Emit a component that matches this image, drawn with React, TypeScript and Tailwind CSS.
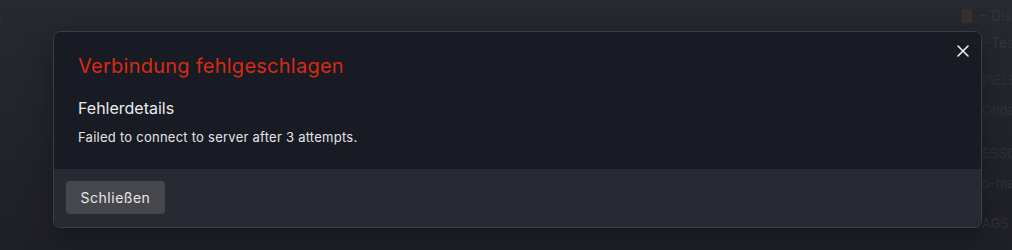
import React from "react";

export default function App() {
  const font = { fontFamily: "Inter, 'Noto Sans', sans-serif" };
  return (
    <div
      className="relative w-[1012px] h-[250px] overflow-hidden bg-gradient-to-b from-[#272930] to-[#1f2026]"
      style={font}
    >
      {/* faded background page */}
      <div className="flex h-full justify-between whitespace-nowrap">
        <div className="pt-[6px] -ml-[6px] text-[14px] text-[#30323a]">a</div>
        <div className="w-[50px] flex flex-col pt-[6px] text-[13px] leading-[20px] text-[#30323a]">
          <div className="flex items-center gap-2 text-[14px] text-[#33353d]">
            <span className="w-[10px] h-[14px] bg-[#3a3030] shrink-0" />
            <span>– Dis</span>
          </div>
          <div className="pl-[18px] mt-[7px] text-[14px] text-[#33353d]">– Tea</div>
          <div className="pl-[20px] mt-[17px]">PIELE</div>
          <div className="pl-[20px] mt-[10px]">Onda</div>
          <div className="pl-[20px] mt-[23px]">ESSO</div>
          <div className="pl-[20px] mt-[10px]">o-ma</div>
          <div className="pl-[20px] mt-[20px]">AGS</div>
        </div>
      </div>

      {/* dialog */}
      <div className="absolute left-[53px] top-[31px] w-[929px] h-[197px] rounded-[7px] border-[1.5px] border-[#3b3e48] bg-[#181a24] overflow-hidden flex flex-col shadow-[0_10px_30px_rgba(0,0,0,0.35)]">
        <button className="absolute right-[8px] top-[9px] w-[20px] h-[20px] flex items-center justify-center text-[#ededed]">
          <svg width="12" height="12" viewBox="0 0 12 12" fill="none">
            <path d="M1 1L11 11M11 1L1 11" stroke="currentColor" strokeWidth="1.6" strokeLinecap="round" />
          </svg>
        </button>
        <div className="flex-1 px-[24px] pt-[20px]">
          <h2 className="text-[20px] leading-[28px] tracking-[0.25px] text-[#d92a12] font-normal">
            Verbindung fehlgeschlagen
          </h2>
          <h3 className="mt-[16px] text-[16px] leading-[24px] text-[#ececec] font-normal">
            Fehlerdetails
          </h3>
          <p className="mt-[7px] text-[13px] leading-[20px] tracking-[0.25px] text-[#e4e4e4]">
            Failed to connect to server after 3 attempts.
          </p>
        </div>
        <div className="h-[58px] bg-[#272a33] flex items-start px-[12px] pt-[12px]">
          <button className="h-[33px] w-[99px] rounded-[4px] bg-[#46474d] text-[14px] tracking-[0.5px] text-[#e8e8e8]">
            Schließen
          </button>
        </div>
      </div>
    </div>
  );
}
